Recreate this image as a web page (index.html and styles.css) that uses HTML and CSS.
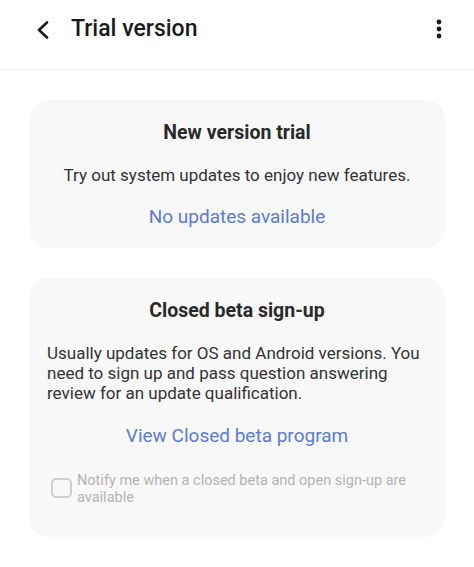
FILE: index.html
```html
<!DOCTYPE html>
<html lang="en">
<head>
<meta charset="utf-8">
<title>Trial version</title>
<link rel="stylesheet" href="styles.css">
</head>
<body>
<header class="topbar">
  <button class="icon-btn back" aria-label="Back">
    <svg width="14" height="18" viewBox="0 0 14 18"><path d="M11 1.5 L3 9 L11 16.5" fill="none" stroke="#1a1a1a" stroke-width="2.6" stroke-linecap="round" stroke-linejoin="round"/></svg>
  </button>
  <h1 class="title">Trial version</h1>
  <button class="icon-btn more" aria-label="More">
    <svg width="6" height="20" viewBox="0 0 6 20"><circle cx="3" cy="3" r="2.4" fill="#1a1a1a"/><circle cx="3" cy="10" r="2.4" fill="#1a1a1a"/><circle cx="3" cy="17" r="2.4" fill="#1a1a1a"/></svg>
  </button>
</header>
<main class="content">
  <section class="card">
    <h2 class="card-title">New version trial</h2>
    <p class="card-text center">Try out system updates to enjoy new features.</p>
    <a class="card-link">No updates available</a>
  </section>
  <section class="card card-beta">
    <h2 class="card-title">Closed beta sign-up</h2>
    <p class="card-text">Usually updates for OS and Android versions. You need to sign up and pass question answering review for an update qualification.</p>
    <a class="card-link">View Closed beta program</a>
    <label class="notify">
      <span class="checkbox"></span>
      <span class="notify-text">Notify me when a closed beta and open sign-up are available</span>
    </label>
  </section>
</main>
</body>
</html>
```

FILE: styles.css
```css
* { box-sizing: border-box; }
html, body { margin: 0; padding: 0; }
body {
  background: #ffffff;
  font-family: Roboto, "Noto Sans", "Liberation Sans", sans-serif;
  color: #333;
  width: 474px;
}
.topbar {
  height: 70px;
  display: flex;
  align-items: center;
  border-bottom: 1px solid #efefef;
  padding: 0 30px 10px 34px;
}
.icon-btn {
  background: none;
  border: 0;
  padding: 0;
  display: flex;
  align-items: center;
  justify-content: center;
}
.back { width: 18px; height: 20px; }
.title {
  flex: 1;
  margin: 0 0 0 19px;
  font-size: 23px;
  font-weight: 500;
  color: #1a1a1a;
  line-height: 26px;
  padding-bottom: 2px;
}
.more { width: 10px; height: 20px; margin-bottom: 2px; }
.content {
  padding: 30px 29px;
  display: flex;
  flex-direction: column;
  gap: 30px;
}
.card {
  background: #f8f8f9;
  border-radius: 20px;
  padding: 21px 18px 19px;
  display: flex;
  flex-direction: column;
  align-items: center;
}
.card-beta { padding-bottom: 31px; }
.card-title {
  margin: 0;
  font-size: 19.5px;
  line-height: 24px;
  font-weight: 700;
  color: #2a2a2a;
  text-align: center;
}
.card-text {
  margin: 20px 0 0;
  font-size: 17px;
  line-height: 20px;
  color: #333;
  align-self: stretch;
}
.card-text.center { text-align: center; }
.card-link {
  margin-top: 20px;
  font-size: 19px;
  line-height: 24px;
  color: #5a7bd6;
  text-align: center;
}
.card-beta .card-link { margin-top: 21px; }
.notify {
  align-self: stretch;
  margin-top: 24px;
  display: flex;
  align-items: flex-start;
  gap: 5px;
  padding-left: 4px;
}
.checkbox {
  flex: none;
  width: 21px;
  height: 20px;
  border: 2px solid #cdcdcd;
  border-radius: 5px;
  margin-top: 6px;
}
.notify-text {
  font-size: 14.5px;
  line-height: 17px;
  color: #b3b3b3;
  padding-right: 14px;
}
```
